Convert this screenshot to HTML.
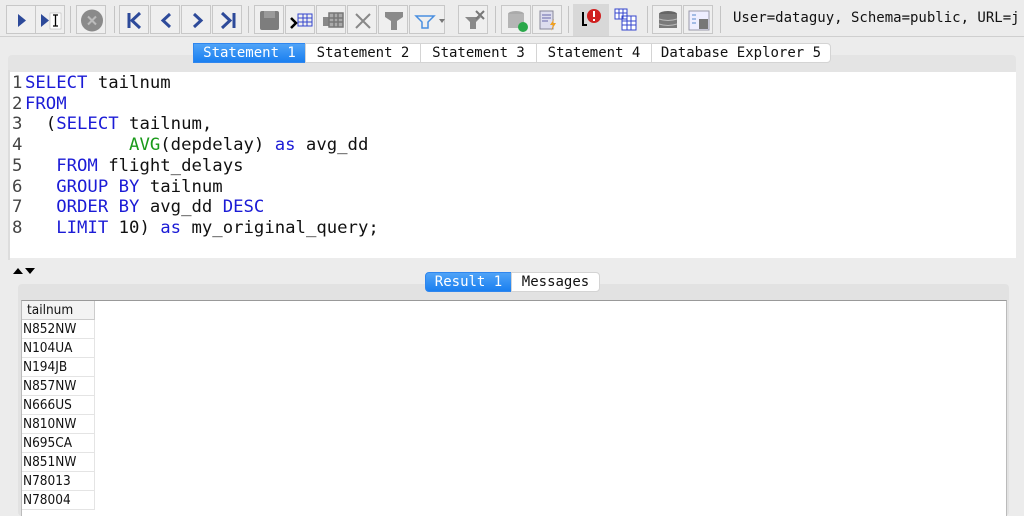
<!DOCTYPE html><html><head><style>
*{margin:0;padding:0;box-sizing:border-box}
body{width:1024px;height:516px;background:#ececec;position:relative;overflow:hidden;font-family:"DejaVu Sans Mono","Liberation Mono",monospace}
.a{position:absolute}
.tb{left:0;top:0;width:1024px;height:37px;background:#ececec;border-bottom:1px solid #cfcfcf}
.btn{position:absolute;top:5px;height:29px;width:30px;border:1px solid #c8c8c8;background:#efefef}
.sep{position:absolute;top:6px;width:1px;height:27px;background:#c4c4c4}
.tab{position:absolute;height:20px;font-size:14px;line-height:19px;text-align:center;background:#fff;border:1px solid #d4d4d4;color:#111}
.sel{background:linear-gradient(#4fa3f7,#1a7ff0);color:#fff;border-color:#2f86ee}
.code{left:10px;top:72px;width:1006px;height:186px;background:#fff;font-size:17.3px;line-height:20.7px;white-space:pre;color:#111;padding-top:1px;padding-left:2px}
.k{color:#1b1bd6}.f{color:#1a9a1a}.ln{color:#444;display:inline-block;width:13px}
.grid{left:21px;top:300px;width:986px;height:216px;background:#fff;border-top:1px solid #999;border-left:1px solid #bbb;border-right:1px solid #bbb}
.cell{position:absolute;left:0;width:73px;height:19px;border-bottom:1px solid #e4e4e4;border-right:1px solid #e4e4e4;font-family:"DejaVu Sans Condensed","DejaVu Sans",sans-serif;font-size:13.5px;line-height:19px;padding-left:1px;color:#111}
</style></head><body>
<div class="a tb">
<div class="btn" style="left:6px"><svg width="30" height="29"><path d="M11 8l8 6.5-8 6.5z" fill="#2d4a9a"/></svg></div>
<div class="btn" style="left:35px"><svg width="30" height="29"><path d="M5 8l8 6.5-8 6.5z" fill="#2d4a9a"/><rect x="14" y="7" width="11" height="16" fill="#fff" stroke="#aaa" stroke-width=".5"/><path d="M17 9h5M19.5 9v11M17 20h5" stroke="#000" stroke-width="1.3"/></svg></div>
<div class="sep" style="left:70px"></div>
<div class="btn" style="left:76px"><svg width="30" height="29"><circle cx="15" cy="14.5" r="11" fill="#8a8a8a"/><path d="M11 10.5l8 8M19 10.5l-8 8" stroke="#bbb" stroke-width="2"/></svg></div>
<div class="sep" style="left:114px"></div>
<div class="btn" style="left:119px"><svg width="30" height="29"><path d="M9 7v15M20 7l-8 7.5 8 7.5" stroke="#2d4a9a" stroke-width="3" fill="none"/></svg></div>
<div class="btn" style="left:150px"><svg width="30" height="29"><path d="M19 8l-7 6.5 7 6.5" stroke="#2d4a9a" stroke-width="3" fill="none"/></svg></div>
<div class="btn" style="left:181px"><svg width="30" height="29"><path d="M12 8l7 6.5-7 6.5" stroke="#2d4a9a" stroke-width="3" fill="none"/></svg></div>
<div class="btn" style="left:212px"><svg width="30" height="29"><path d="M9 7l8 7.5-8 7.5M21 7v15" stroke="#2d4a9a" stroke-width="3" fill="none"/></svg></div>
<div class="sep" style="left:248px"></div>
<div class="btn" style="left:254px"><svg width="30" height="29"><rect x="5" y="5" width="19" height="19" rx="2" fill="#7d7d7d"/><rect x="9" y="5" width="11" height="7" fill="#9a9a9a"/></svg></div>
<div class="btn" style="left:285px"><svg width="30" height="29"><path d="M5 12l5 5-5 5" stroke="#000" stroke-width="2.5" fill="none"/><path d="M12 8h14v12H12zM12 12h14M12 16h14M17 8v12M21 8v12" stroke="#3344cc" stroke-width="1" fill="none"/></svg></div>
<div class="btn" style="left:316px"><svg width="30" height="29"><rect x="6" y="11" width="6" height="9" fill="#888"/><path d="M12 7h14v14H12zM12 12h14M12 16h14M17 7v14M21 7v14" stroke="#777" stroke-width="1.5" fill="#aaa"/></svg></div>
<div class="btn" style="left:347px"><svg width="30" height="29"><path d="M8 8l14 14M22 8L8 22" stroke="#888" stroke-width="2"/></svg></div>
<div class="btn" style="left:378px"><svg width="30" height="29"><path d="M6 6h18v5l-6 4v9h-6v-9l-6-4z" fill="#8a8a8a"/></svg></div>
<div class="btn" style="left:409px;width:36px"><svg width="36" height="29"><path d="M6 10h18l-6 6v6h-6v-6z" stroke="#4a8fe0" stroke-width="1.5" fill="none"/><path d="M29 13h6l-3 4z" fill="#777"/></svg></div>
<div class="btn" style="left:458px"><svg width="30" height="29"><path d="M6 11h16l-5 5v7h-6v-7z" fill="#8a8a8a"/><path d="M17 5l8 8M25 5l-8 8" stroke="#777" stroke-width="2"/></svg></div>
<div class="sep" style="left:495px"></div>
<div class="btn" style="left:501px"><svg width="30" height="29"><ellipse cx="14" cy="8" rx="8" ry="3" fill="#aaa"/><rect x="6" y="8" width="16" height="14" fill="#b5b5b5"/><circle cx="21" cy="21" r="5" fill="#2aa84a"/></svg></div>
<div class="btn" style="left:532px"><svg width="30" height="29"><rect x="7" y="5" width="13" height="18" fill="#dde" stroke="#889"/><path d="M9 9h9M9 12h9M9 15h6" stroke="#66a"/><path d="M21 13l-4 6h3l-2 6 5-8h-3z" fill="#f0a020"/></svg></div>
<div class="sep" style="left:568px"></div>
<div class="a" style="left:573px;top:4px;width:36px;height:32px;background:#d8d8d8"><svg width="36" height="32"><path d="M10 8v13h4" stroke="#000" stroke-width="2" fill="none"/><circle cx="21" cy="12" r="7" fill="#d02020"/><rect x="20" y="7" width="2" height="6" fill="#fff"/><rect x="20" y="15" width="2" height="2" fill="#fff"/></svg></div>
<div class="a" style="left:613px;top:7px"><svg width="26" height="26"><path d="M2 2h12v10H2zM2 6h12M6 2v10M10 2v10M9 9h14v14H9zM9 14h14M9 18h14M14 9v14M18 9v14" stroke="#3344cc" stroke-width="1" fill="#fff"/></svg></div>
<div class="sep" style="left:647px"></div>
<div class="btn" style="left:652px"><svg width="30" height="29"><ellipse cx="15" cy="8" rx="9" ry="3" fill="#666"/><rect x="6" y="8" width="18" height="14" fill="#7a7a7a"/><path d="M6 13q9 3 18 0M6 18q9 3 18 0" stroke="#bbb" fill="none"/></svg></div>
<div class="btn" style="left:683px"><svg width="30" height="29"><rect x="5" y="5" width="20" height="19" fill="#eef" stroke="#99a"/><rect x="15" y="13" width="9" height="10" fill="#777"/><path d="M8 9h4M8 13h4M8 17h4" stroke="#58c"/></svg></div>
<div class="sep" style="left:720px"></div>
<div class="a" style="left:733px;top:10px;font-size:14px;color:#111;white-space:pre">User=dataguy, Schema=public, URL=j</div>
</div>
<div class="a" style="left:8px;top:55px;width:1008px;height:20px;background:#e4e4e4;border-radius:4px"></div>
<div class="tab sel" style="left:193px;top:43px;width:113px">Statement 1</div>
<div class="tab" style="left:305px;top:43px;width:116px">Statement 2</div>
<div class="tab" style="left:420px;top:43px;width:117px">Statement 3</div>
<div class="tab" style="left:536px;top:43px;width:116px">Statement 4</div>
<div class="tab" style="left:651px;top:43px;width:180px;border-radius:0 4px 4px 0">Database Explorer 5</div>
<div class="a code"><span class="ln">1</span><span class="k">SELECT</span> tailnum
<span class="ln">2</span><span class="k">FROM</span>
<span class="ln">3</span>  (<span class="k">SELECT</span> tailnum,
<span class="ln">4</span>          <span class="f">AVG</span>(depdelay) <span class="k">as</span> avg_dd
<span class="ln">5</span>   <span class="k">FROM</span> flight_delays
<span class="ln">6</span>   <span class="k">GROUP BY</span> tailnum
<span class="ln">7</span>   <span class="k">ORDER BY</span> avg_dd <span class="k">DESC</span>
<span class="ln">8</span>   <span class="k">LIMIT</span> 10) <span class="k">as</span> my_original_query;</div>
<div class="a" style="left:8px;top:70px;width:2px;height:190px;background:#ddd"></div>
<div class="a" style="left:12px;top:260px"><svg width="24" height="8"><path d="M1 7l5-6 5 6zM13 1h10l-5 6z" fill="#000"/></svg></div>
<div class="a" style="left:18px;top:284px;width:991px;height:232px;background:#e2e2e2;border-radius:4px"></div>
<div class="tab sel" style="left:425px;top:272px;width:87px;border-radius:4px 0 0 4px">Result 1</div>
<div class="tab" style="left:511px;top:272px;width:89px;border-radius:0 4px 4px 0">Messages</div>
<div class="a grid">
<div class="cell" style="top:0;background:#f3f3f3;border-right:1px solid #ccc;border-bottom:1px solid #ccc;padding-left:5px">tailnum</div>
<div class="cell" style="top:19px">N852NW</div>
<div class="cell" style="top:38px">N104UA</div>
<div class="cell" style="top:57px">N194JB</div>
<div class="cell" style="top:76px">N857NW</div>
<div class="cell" style="top:95px">N666US</div>
<div class="cell" style="top:114px">N810NW</div>
<div class="cell" style="top:133px">N695CA</div>
<div class="cell" style="top:152px">N851NW</div>
<div class="cell" style="top:171px">N78013</div>
<div class="cell" style="top:190px">N78004</div>
</div>
</body></html>
